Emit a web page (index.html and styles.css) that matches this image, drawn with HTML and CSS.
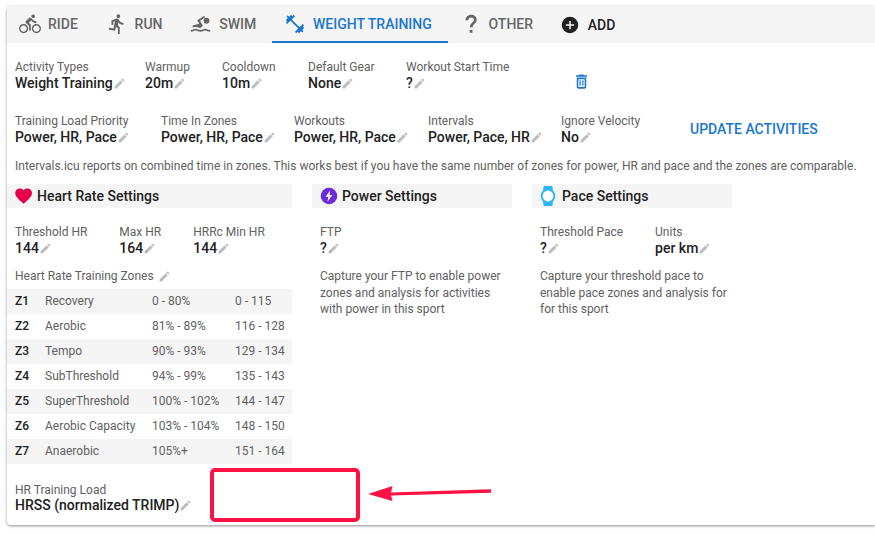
FILE: index.html
```html
<!DOCTYPE html>
<html>
<head>
  <meta charset="utf-8">
  <title>Sport Settings</title>
  <link rel="stylesheet" href="styles.css">
</head>
<body>
  <svg class="defs" width="0" height="0">
    <symbol id="pencil" viewBox="0 0 24 24"><path d="M3 17.25V21h3.75L17.81 9.94l-3.75-3.75L3 17.25zM20.71 7.04a1 1 0 0 0 0-1.41l-2.34-2.34a1 1 0 0 0-1.41 0l-1.83 1.83 3.75 3.75 1.83-1.83z"/></symbol>
  </svg>

  <div class="card">
    <div class="tabs">
      <div class="tab">
        <svg class="tab-icon" viewBox="0 0 24 24"><path d="M15.5 5.5c1.1 0 2-.9 2-2s-.9-2-2-2-2 .9-2 2 .9 2 2 2zM5 12c-2.8 0-5 2.2-5 5s2.2 5 5 5 5-2.2 5-5-2.2-5-5-5zm0 8.5c-1.9 0-3.5-1.6-3.5-3.5s1.6-3.5 3.5-3.5 3.5 1.6 3.5 3.5-1.6 3.5-3.5 3.5zm5.8-10l2.4-2.4.8.8c1.3 1.3 3 2.1 5.1 2.1V9c-1.5 0-2.7-.6-3.6-1.5l-1.9-1.9c-.5-.4-1-.6-1.6-.6s-1.1.2-1.4.6L7.8 8.4c-.4.4-.6.9-.6 1.4 0 .6.2 1.1.6 1.4L11 14v5h2v-6.2l-2.2-2.3zM19 12c-2.8 0-5 2.2-5 5s2.2 5 5 5 5-2.2 5-5-2.2-5-5-5zm0 8.5c-1.9 0-3.5-1.6-3.5-3.5s1.6-3.5 3.5-3.5 3.5 1.6 3.500 3.5-1.6 3.5-3.5 3.5z"/></svg>
        Ride
      </div>
      <div class="tab">
        <svg class="tab-icon" viewBox="0 0 24 24"><path d="M13.49 5.48c1.1 0 2-.9 2-2s-.9-2-2-2-2 .9-2 2 .9 2 2 2zm-3.6 13.9l1-4.4 2.1 2v6h2v-7.5l-2.1-2 .6-3c1.3 1.5 3.3 2.5 5.5 2.5v-2c-1.9 0-3.5-1-4.3-2.4l-1-1.6c-.4-.6-1-1-1.7-1-.3 0-.5.1-.8.1l-5.2 2.2v4.7h2v-3.4l1.8-.7-1.6 8.1-4.9-1-.4 2 7 1.4z"/></svg>
        Run
      </div>
      <div class="tab">
        <svg class="tab-icon" viewBox="0 0 24 24"><circle cx="18" cy="8.5" r="3.200"/><path d="M3 13.500l7-1.700L8 8l7.500-5 1 1.700-5.500 3.800 3 5.500-3 2.500c-2.200-1.300-5-1.600-8-.7zM1 18.500c2.200 0 2.900-1.400 5-1.400s3 1.400 5.400 1.400 3-1.400 5.200-1.400 3 1.400 5.400 1.400v2c-2.800 0-3.400-1.400-5.400-1.400s-2.600 1.400-5.200 1.400-3.200-1.400-5.400-1.400-2.600 1.400-5 1.400z"/></svg>
        Swim
      </div>
      <div class="tab tab-active">
        <svg class="tab-icon" viewBox="0 0 24 24"><path d="M20.57 14.86L22 13.43 20.57 12 17 15.57 8.43 7 12 3.43 10.57 2 9.14 3.43 7.71 2 5.57 4.14 4.14 2.71 2.71 4.14l1.43 1.43L2 7.71l1.43 1.43L2 10.57 3.43 12 7 8.43 15.57 17 12 20.57 13.43 22l1.43-1.43L16.29 22l2.14-2.14 1.43 1.43 1.43-1.43-1.43-1.43L22 16.29z"/></svg>
        Weight Training
      </div>
      <div class="tab">
        <svg class="tab-icon" viewBox="0 0 24 24"><path d="M10.500 18.500h3v3h-3zM6 8c0-3.400 2.600-6 6.200-6 3.500 0 6 2.300 6 5.300 0 2.300-1.200 3.500-2.600 4.700-1.300 1.100-1.800 1.800-1.800 3.500h-3c0-2.600 1-3.800 2.500-5.100 1.200-1 1.900-1.700 1.900-3 0-1.500-1.200-2.600-3-2.600S9 5.900 9 8z"/></svg>
        Other
      </div>
      <div class="tab tab-add">
        <svg class="add-icon" viewBox="0 0 24 24"><path d="M12 1a11 11 0 1 0 0 22 11 11 0 0 0 0-22zm5.500 12H13v4.500h-2V13H6.500v-2H11V6.500h2V11h4.500z"/></svg>
        Add
      </div>
    </div>

    <div class="body">
      <div class="row row-one">
        <div class="field"><div class="label">Activity Types</div><div class="value">Weight Training<svg class="edit"><use href="#pencil"/></svg></div></div>
        <div class="field"><div class="label">Warmup</div><div class="value">20m<svg class="edit"><use href="#pencil"/></svg></div></div>
        <div class="field"><div class="label">Cooldown</div><div class="value">10m<svg class="edit"><use href="#pencil"/></svg></div></div>
        <div class="field"><div class="label">Default Gear</div><div class="value">None<svg class="edit"><use href="#pencil"/></svg></div></div>
        <div class="field"><div class="label">Workout Start Time</div><div class="value">?<svg class="edit"><use href="#pencil"/></svg></div></div>
        <svg class="trash" viewBox="0 0 24 24"><path d="M6 19c0 1.100.9 2 2 2h8c1.100 0 2-.9 2-2V7H6v12zM8 9h8v10H8V9zm1.500 1.500h1.500v7H9.500zm3.500 0h1.500v7H13zM15.500 4l-1-1h-5l-1 1H5v2h14V4z"/></svg>
      </div>

      <div class="row row-two">
        <div class="field"><div class="label">Training Load Priority</div><div class="value">Power, HR, Pace<svg class="edit"><use href="#pencil"/></svg></div></div>
        <div class="field"><div class="label">Time In Zones</div><div class="value">Power, HR, Pace<svg class="edit"><use href="#pencil"/></svg></div></div>
        <div class="field"><div class="label">Workouts</div><div class="value">Power, HR, Pace<svg class="edit"><use href="#pencil"/></svg></div></div>
        <div class="field"><div class="label">Intervals</div><div class="value">Power, Pace, HR<svg class="edit"><use href="#pencil"/></svg></div></div>
        <div class="field"><div class="label">Ignore Velocity</div><div class="value">No<svg class="edit"><use href="#pencil"/></svg></div></div>
        <div class="update">Update Activities</div>
      </div>

      <p class="note">Intervals.icu reports on combined time in zones. This works best if you have the same number of zones for power, HR and pace and the zones are comparable.</p>

      <div class="sections">
        <div class="section section-hr">
          <div class="section-head">
            <svg class="head-icon" viewBox="0 0 24 24"><path fill="#e6004c" d="M12 21.350l-1.450-1.320C5.400 15.360 2 12.280 2 8.500 2 5.420 4.420 3 7.500 3c1.740 0 3.410.81 4.500 2.090C13.090 3.810 14.760 3 16.500 3 19.580 3 22 5.420 22 8.500c0 3.780-3.400 6.860-8.550 11.540L12 21.350z" transform="translate(-2 -1.500) scale(1.120)"/></svg>
            Heart Rate Settings
          </div>
          <div class="section-fields">
            <div class="field"><div class="label">Threshold HR</div><div class="value">144<svg class="edit"><use href="#pencil"/></svg></div></div>
            <div class="field"><div class="label">Max HR</div><div class="value">164<svg class="edit"><use href="#pencil"/></svg></div></div>
            <div class="field"><div class="label">HRRc Min HR</div><div class="value">144<svg class="edit"><use href="#pencil"/></svg></div></div>
          </div>
          <div class="zones-title">Heart Rate Training Zones <svg class="edit"><use href="#pencil"/></svg></div>
          <table class="zones">
            <tr><td class="zone">Z1</td><td class="zone-name">Recovery</td><td class="zone-pct">0 - 80%</td><td>0 - 115</td></tr>
            <tr><td class="zone">Z2</td><td class="zone-name">Aerobic</td><td class="zone-pct">81% - 89%</td><td>116 - 128</td></tr>
            <tr><td class="zone">Z3</td><td class="zone-name">Tempo</td><td class="zone-pct">90% - 93%</td><td>129 - 134</td></tr>
            <tr><td class="zone">Z4</td><td class="zone-name">SubThreshold</td><td class="zone-pct">94% - 99%</td><td>135 - 143</td></tr>
            <tr><td class="zone">Z5</td><td class="zone-name">SuperThreshold</td><td class="zone-pct">100% - 102%</td><td>144 - 147</td></tr>
            <tr><td class="zone">Z6</td><td class="zone-name">Aerobic Capacity</td><td class="zone-pct">103% - 104%</td><td>148 - 150</td></tr>
            <tr><td class="zone">Z7</td><td class="zone-name">Anaerobic</td><td class="zone-pct">105%+</td><td>151 - 164</td></tr>
          </table>
          <div class="field field-load"><div class="label">HR Training Load</div><div class="value">HRSS (normalized TRIMP)<svg class="edit"><use href="#pencil"/></svg></div></div>
        </div>

        <div class="section">
          <div class="section-head">
            <svg class="head-icon" viewBox="0 0 24 24"><circle cx="12" cy="12" r="11" fill="#6a2bd9"/><path fill="#fff" d="M13.500 4.500L7.500 13h3.500l-1 6.500 6.500-9h-3.800z"/></svg>
            Power Settings
          </div>
          <div class="section-fields">
            <div class="field"><div class="label">FTP</div><div class="value">?<svg class="edit"><use href="#pencil"/></svg></div></div>
          </div>
          <p class="hint">Capture your FTP to enable power zones and analysis for activities with power in this sport</p>
        </div>

        <div class="section">
          <div class="section-head">
            <svg class="watch-icon" viewBox="0 0 24 24"><path fill="#29b6f6" d="M7 0h10l1 5.500a9 9 0 0 1 0 13L17 24H7l-1-5.500a9 9 0 0 1 0-13z"/><circle cx="12" cy="12" r="6.500" fill="#fff"/></svg>
            Pace Settings
          </div>
          <div class="section-fields">
            <div class="field"><div class="label">Threshold Pace</div><div class="value">?<svg class="edit"><use href="#pencil"/></svg></div></div>
            <div class="field"><div class="label">Units</div><div class="value">per km<svg class="edit"><use href="#pencil"/></svg></div></div>
          </div>
          <p class="hint">Capture your threshold pace to enable pace zones and analysis for for this sport</p>
        </div>
      </div>
    </div>
  </div>

  <!-- annotation drawn over the page -->
  <div class="callout"></div>
  <svg class="arrow" width="130" height="20" viewBox="0 0 130 20"><path fill="#ff1144" d="M0 11L24.500 3 23 9.600 123 6.200V9.800L23 12.600 24.500 18z"/></svg>
</body>
</html>
```

FILE: styles.css
```css
body {
  margin: 0;
  font-family: Roboto, "Liberation Sans", sans-serif;
  background: #fff;
  overflow: hidden;
  height: 534px;
  position: relative;
}
.defs {
  position: absolute;
}
.card {
  margin: 6px 0 0 7px;
  height: 519px;
  border-radius: 4px 0 0 4px;
  box-shadow: 0 1px 3px rgba(0, 0, 0, 0.45);
  background: #fff;
  overflow: hidden;
}
.tabs {
  display: flex;
  height: 37px;
  background: #f5f5f5;
}
.tab {
  display: flex;
  align-items: center;
  gap: 7px;
  padding: 0 15.75px 2px 12px;
  font-size: 14px;
  font-weight: 500;
  color: #666;
  text-transform: uppercase;
}
.tab-active {
  color: #1976d2;
  padding-bottom: 0;
  border-bottom: 2px solid #1976d2;
}
.tab-add {
  color: #212121;
  gap: 9px;
  padding-bottom: 0;
}
.tab-icon {
  width: 22px;
  height: 22px;
  fill: currentColor;
}
.add-icon {
  width: 18px;
  height: 18px;
  fill: #212121;
}
.body {
  padding: 0 0 0 8px;
}
.row {
  display: grid;
  align-items: start;
}
.row-one {
  grid-template-columns: 130px 77px 86px 98px 169px auto;
  margin-top: 17px;
}
.row-two {
  grid-template-columns: 146px 133px 134px 133px 129px auto;
  margin-top: 22px;
}
.label {
  font-size: 12px;
  line-height: 15px;
  color: #616161;
}
.value {
  display: flex;
  align-items: center;
  font-size: 14px;
  font-weight: 500;
  line-height: 17px;
  color: #212121;
}
.edit {
  width: 13px;
  height: 13px;
  fill: #bdbdbd;
}
.trash {
  width: 19px;
  height: 19px;
  margin: 12px 0 0 -3px;
  fill: #1976d2;
}
.update {
  font-size: 14px;
  font-weight: 500;
  color: #1976d2;
  text-transform: uppercase;
  margin-top: 7px;
}
.note {
  margin: 13px 0 0;
  font-size: 12px;
  line-height: 15px;
  color: #616161;
}
.sections {
  display: flex;
  gap: 20px;
  margin: 10px 0 0 -8px;
}
.section {
  width: 200px;
}
.section-hr {
  width: 285px;
}
.section-head {
  display: flex;
  align-items: center;
  gap: 4px;
  height: 24px;
  padding-left: 8px;
  background: #f5f5f5;
  font-size: 14px;
  font-weight: 500;
  color: #212121;
}
.head-icon {
  width: 18px;
  height: 18px;
}
.watch-icon {
  width: 20px;
  height: 20px;
  margin-left: -2px;
}
.section-fields {
  display: flex;
  gap: 32px;
  margin-top: 17px;
  padding-left: 8px;
}
.zones-title {
  display: flex;
  align-items: center;
  gap: 4px;
  margin: 12px 0 0 8px;
  font-size: 12px;
  line-height: 15px;
  color: #616161;
}
.zones {
  width: 285px;
  margin-top: 5px;
  table-layout: fixed;
  border-collapse: collapse;
  font-size: 12px;
  color: #616161;
}
.zones td {
  height: 23px;
  padding: 0 0 2px;
}
.zones tr:nth-child(odd) {
  background: #f5f5f5;
}
.zones .zone {
  width: 30px;
  padding-left: 8px;
  font-weight: 500;
  color: #212121;
}
.zones .zone-name {
  width: 107px;
}
.zones .zone-pct {
  width: 83px;
}
.field-load {
  margin: 19px 0 0 8px;
}
.field-load .value {
  margin-top: -1px;
}
.hint {
  margin: 11px 0 0;
  padding: 0 0 0 8px;
  font-size: 12px;
  line-height: 16.5px;
  color: #616161;
}
.callout {
  position: absolute;
  left: 210px;
  top: 468px;
  width: 142px;
  height: 46px;
  border: 4px solid #ff1144;
  border-radius: 5px;
}
.arrow {
  position: absolute;
  left: 368px;
  top: 483px;
}
```
